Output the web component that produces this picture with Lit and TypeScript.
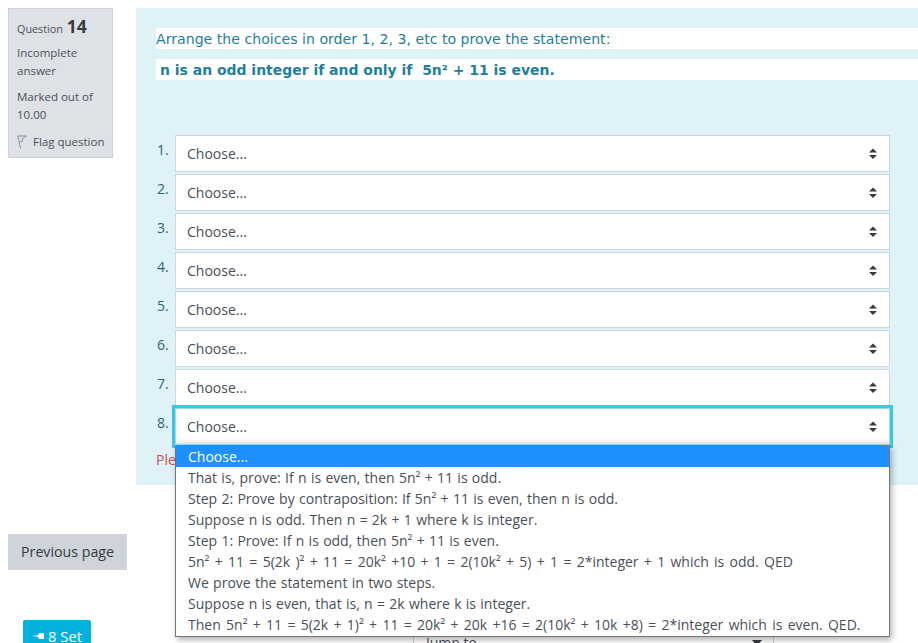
import { LitElement, html, css, svg } from "lit";
import { customElement } from "lit/decorators.js";

const OPTIONS = [
  { text: "That is, prove: If n is even, then 5n² + 11 is odd." },
  { text: "Step 2: Prove by contraposition: If 5n² + 11 is even, then n is odd." },
  { text: "Suppose n is odd. Then n = 2k + 1 where k is integer." },
  { text: "Step 1: Prove: If n is odd, then 5n² + 11 is even." },
  { text: "5n² + 11 = 5(2k )² + 11 = 20k² +10 + 1 = 2(10k² + 5) + 1 = 2*integer + 1 which is odd. QED", math: true },
  { text: "We prove the statement in two steps." },
  { text: "Suppose n is even, that is, n = 2k where k is integer." },
  { text: "Then 5n² + 11 = 5(2k + 1)² + 11 = 20k² + 20k +16 = 2(10k² + 10k +8) = 2*integer which is even. QED.", math: true },
];

const carets = svg`<path d="M4 0.5 L8 4.5 H0 Z M0 7 H8 L4 11 Z" fill="#343a40"/>`;

@customElement("app-root")
export class AppRoot extends LitElement {
  static styles = css`
    :host {
      display: block;
      height: 643px;
      width: 918px;
      overflow: hidden;
      background: #fff;
      font-family: "Open Sans", "Noto Sans", sans-serif;
      font-size: 14px;
      color: #373a3c;
    }
    .page {
      padding: 8px 0 0 8px;
    }
    .que {
      display: flex;
      gap: 23px;
      align-items: flex-start;
    }
    .info {
      box-sizing: border-box;
      width: 105px;
      height: 150px;
      flex: none;
      background: #dee2e6;
      border: 1px solid #cbd2da;
      padding: 6px 8px 0;
      font-size: 11.5px;
      line-height: 18px;
      color: #495057;
    }
    .info p {
      margin: 0 0 8px;
    }
    .qno {
      line-height: 22px;
      margin-bottom: 4px;
      white-space: nowrap;
      font-size: 10.8px;
    }
    .qno b {
      font-size: 17.5px;
      color: #343a40;
      margin-left: 1px;
    }
    .flag {
      display: flex;
      align-items: center;
      gap: 6px;
      white-space: nowrap;
      margin-top: 9px;
    }
    .flag svg {
      flex: none;
    }
    .content {
      flex: 1;
      box-sizing: border-box;
      height: 477px;
      background: #def2f8;
      padding: 20px 0 0 20px;
    }
    .qtext {
      font-family: "DejaVu Sans", Verdana, sans-serif;
      font-size: 14.14px;
      color: #1f7f9c;
      margin-bottom: 55px;
    }
    .qtext div {
      background: #fff;
      height: 21px;
      line-height: 23px;
      margin-bottom: 10px;
      white-space: pre;
    }
    .qtext .stmt {
      font-weight: 700;
      font-size: 13.96px;
      padding-left: 4px;
    }
    .rows {
      display: flex;
      flex-direction: column;
      gap: 2px;
      width: 734px;
    }
    .row {
      display: flex;
      position: relative;
    }
    .num {
      box-sizing: border-box;
      width: 19px;
      flex: none;
      padding-left: 1px;
      line-height: 30px;
      color: #2f6473;
    }
    .select {
      box-sizing: border-box;
      flex: 1;
      height: 37px;
      background: #fff;
      border: 1px solid #ced4da;
      display: flex;
      align-items: center;
      justify-content: space-between;
      padding: 0 12px 0 11px;
      color: #495057;
    }
    .select svg {
      flex: none;
    }
    .select.focus {
      border-color: #9fdff0;
      box-shadow: 0 0 0 3px #3dc6e3, inset 0 -7px 6px -6px rgba(0, 0, 0, 0.16);
    }
    .error {
      color: #c8504c;
      margin-top: 5px;
      line-height: 20px;
    }
    .list {
      position: absolute;
      left: 19px;
      right: 0;
      top: 37px;
      box-sizing: border-box;
      background: #fff;
      border: 1px solid #767676;
      box-shadow: 2px 3px 6px rgba(0, 0, 0, 0.3);
      z-index: 5;
      padding-bottom: 1px;
    }
    .opt {
      height: 21px;
      line-height: 21px;
      padding: 0 12px;
      white-space: nowrap;
      color: #495057;
      word-spacing: 0.67px;
    }
    .opt.math {
      word-spacing: 1.66px;
    }
    .opt.sel {
      background: #1e90ff;
      color: #fff;
      word-spacing: 0;
    }
    .prev {
      display: inline-block;
      margin-top: 49px;
      box-sizing: border-box;
      width: 119px;
      height: 36px;
      line-height: 36px;
      text-align: center;
      background: #ced4da;
      color: #373a3c;
      font-size: 14.2px;
    }
    .foot {
      display: flex;
      align-items: flex-start;
      margin-top: 50px;
      padding-left: 15px;
    }
    .set {
      box-sizing: border-box;
      width: 68px;
      height: 36px;
      background: #00b2dc;
      color: #fff;
      border-radius: 2px;
      display: flex;
      justify-content: center;
      gap: 4px;
      line-height: 32px;
      font-size: 14.8px;
    }
    .set svg {
      margin-top: 12px;
    }
    .jump {
      box-sizing: border-box;
      margin: 12px 0 0 322px;
      width: 361px;
      height: 36px;
      border: 1px solid #ced4da;
      display: flex;
      justify-content: space-between;
      padding: 0 11px 0 12px;
      line-height: 20px;
      color: #495057;
    }
    .jump svg {
      margin-top: 7px;
    }
  `;

  private sel(focus: boolean) {
    return html`<div class="select ${focus ? "focus" : ""}">
      <span>Choose...</span>
      <svg width="8" height="12" viewBox="0 0 8 12">${carets}</svg>
    </div>`;
  }

  render() {
    return html`<div class="page">
      <div class="que">
        <div class="info">
          <div class="qno">Question <b>14</b></div>
          <p>Incomplete answer</p>
          <p>Marked out of 10.00</p>
          <div class="flag">
            <svg width="10" height="14" viewBox="0 0 10 14" fill="none" stroke="#8f959b" stroke-width="1">
              <path d="M0.8 1 L3.6 13.5 M0.8 1 H9.5 L5 3.8 L5.6 6.2 L2.2 7.2" />
            </svg>
            <span>Flag question</span>
          </div>
        </div>
        <div class="content">
          <div class="qtext">
            <div>Arrange the choices in order 1, 2, 3, etc to prove the statement:</div>
            <div class="stmt">n is an odd integer if and only if  5n² + 11 is even.</div>
          </div>
          <div class="rows">
            ${[1, 2, 3, 4, 5, 6, 7, 8].map(
              (n) => html`<div class="row">
                <div class="num">${n}.</div>
                ${this.sel(n === 8)}
                ${n === 8
                  ? html`<div class="list">
                      <div class="opt sel">Choose...</div>
                      ${OPTIONS.map((o) => html`<div class="opt ${o.math ? "math" : ""}">${o.text}</div>`)}
                    </div>`
                  : ""}
              </div>`
            )}
          </div>
          <div class="error">Please select an answer.</div>
        </div>
      </div>
      <div class="prev">Previous page</div>
      <div class="foot">
        <div class="set">
          <svg width="12" height="8" viewBox="0 0 12 8"><path d="M0 4 L6 3.2 L7 1 H12 V7 H7 L6 4.8 Z" fill="#fff"/></svg>
          <span>8 Set</span>
        </div>
        <div class="jump">
          <span>Jump to...</span>
          <svg width="10" height="6" viewBox="0 0 10 6"><path d="M0 0 H10 L5 6 Z" fill="#343a40"/></svg>
        </div>
      </div>
    </div>`;
  }
}
